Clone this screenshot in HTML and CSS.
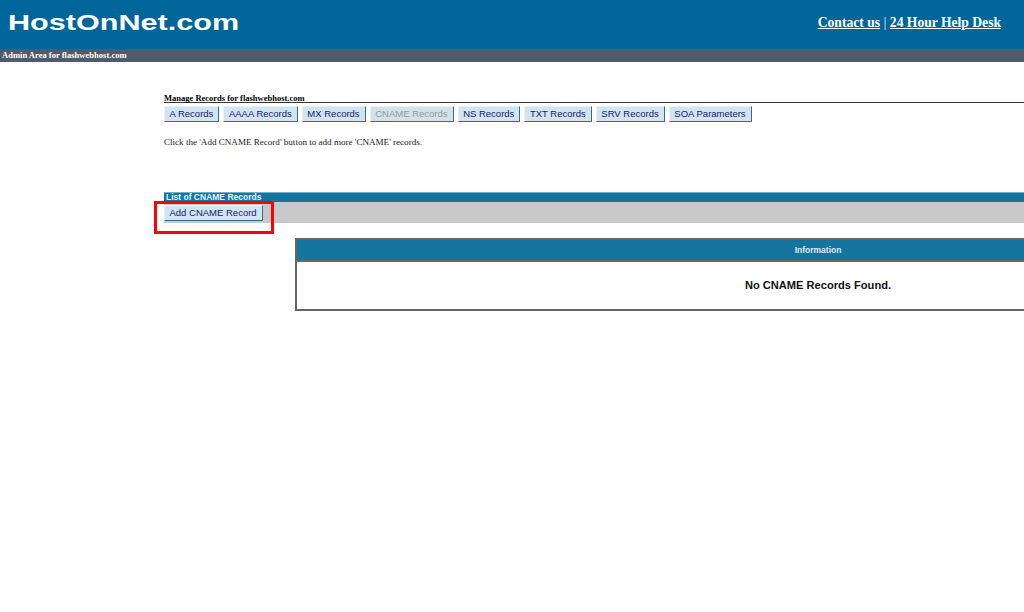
FILE: index.html
```html
<!DOCTYPE html>
<html lang="en">
<head>
<meta charset="utf-8">
<title>Manage Records</title>
<link rel="stylesheet" href="styles.css">
</head>
<body>
<header class="top">
  <div class="logo">HostOnNet.com</div>
  <nav class="help"><a href="#">Contact us</a> | <a href="#">24 Hour Help Desk</a></nav>
</header>
<div class="subbar">Admin Area for flashwebhost.com</div>
<main class="main">
  <h1 class="title">Manage Records for flashwebhost.com</h1>
  <div class="tabs">
    <button class="btn">A Records</button>
    <button class="btn">AAAA Records</button>
    <button class="btn">MX Records</button>
    <button class="btn off">CNAME Records</button>
    <button class="btn">NS Records</button>
    <button class="btn">TXT Records</button>
    <button class="btn">SRV Records</button>
    <button class="btn">SOA Parameters</button>
  </div>
  <p class="hint">Click the 'Add CNAME Record' button to add more 'CNAME' records.</p>
  <div class="listhead">List of CNAME Records</div>
  <div class="toolbar">
    <button class="btn">Add CNAME Record</button>
    <span class="redbox"></span>
  </div>
  <section class="info">
    <div class="infohead">Information</div>
    <div class="infobody">No CNAME Records Found.</div>
  </section>
</main>
</body>
</html>
```
FILE: styles.css
```css
html, body { margin: 0; padding: 0; overflow: hidden; height: 612px; background: #fff; }
body { width: 1024px; font-family: "Liberation Serif", serif; }
.top { height: 49px; background: #006699; display: flex; justify-content: space-between; align-items: center; box-sizing: border-box; padding: 0 23px 0 8px; }
.logo { font-family: "Liberation Sans", sans-serif; font-weight: 700; font-size: 22px; color: #fff; transform: scaleX(1.39); transform-origin: left center; white-space: nowrap; margin-top: -3px; }
.help { font-size: 13.6px; font-weight: 700; color: #a9cfe2; margin-top: -4px; white-space: nowrap; }
.help a { color: #fff; text-decoration: underline; }
.subbar { height: 13px; line-height: 13px; background: #4f5a6a; color: #fff; font-size: 8.55px; font-weight: 700; padding-left: 2px; }
.main { width: 1177px; margin-left: 164px; padding-top: 31px; }
.title { margin: 0; font-size: 8.5px; line-height: 10px; font-weight: 700; color: #000; border-bottom: 1px solid #333; height: 9px; }
.tabs { display: flex; gap: 4px; margin-top: 3px; }
.btn { font-family: "Liberation Sans", sans-serif; font-size: 9.5px; line-height: 11px; color: #16206e; background: #d2e4f0; border-style: solid; border-color: #e8f1f7 #2a6f97 #2a6f97 #e8f1f7; border-width: 1px; padding: 0 5.1px 2px 4.5px; height: 16px; box-sizing: border-box; white-space: nowrap; margin: 0; }
.btn.off { color: #8f9aa3; background: #d4e2e8; }
.hint { margin: 15px 0 0; font-size: 9.07px; line-height: 11px; color: #222; height: 55px; }
.listhead { background: #16759f; border-top: 1px solid #6fb0cc; color: #e8f2f7; font-family: "Liberation Sans", sans-serif; font-weight: 700; font-size: 8.5px; line-height: 9px; height: 9px; padding-left: 2px; }
.toolbar { position: relative; background: #c9c9c9; height: 21px; box-sizing: border-box; padding-top: 3px; }
.toolbar .btn { display: block; }
.redbox { position: absolute; left: -10px; top: -1px; width: 114px; height: 27px; border: 3px solid #f00; }
.info { margin: 15px 0 0 131px; border: 2px solid #666; border-right: 0; width: 1042px; }
.infohead { background: #16759f; color: #dcebf3; font-family: "Liberation Sans", sans-serif; font-weight: 700; font-size: 8.5px; height: 20px; line-height: 20px; text-align: center; border-bottom: 2px solid #666; }
.infobody { height: 47px; line-height: 46px; text-align: center; font-family: "Liberation Sans", sans-serif; font-weight: 700; font-size: 11.1px; color: #111; }
```
